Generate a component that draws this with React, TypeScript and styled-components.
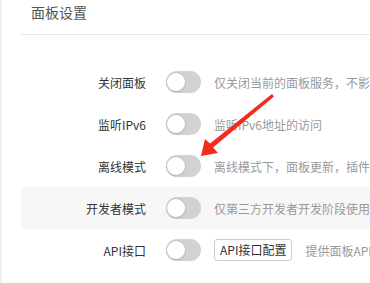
import React from 'react';
import styled, { createGlobalStyle } from 'styled-components';

const GlobalStyle = createGlobalStyle`
  html, body {
    margin: 0;
    padding: 0;
    background: #fff;
  }
  body {
    font-family: "Noto Sans CJK SC", "Noto Sans", sans-serif;
    font-size: 12px;
    color: #333;
  }
`;

const Page = styled.div`
  position: relative;
  width: 370px;
  height: 283px;
  overflow: hidden;
  border-left: 2px solid #f0f0f0;
  box-sizing: border-box;
  padding-left: 19px;
`;

const Title = styled.div`
  height: 35px;
  line-height: 24px;
  padding-left: 10px;
  font-size: 14px;
  color: #555;
  border-bottom: 1px solid #e6e6e6;
  box-sizing: border-box;
`;

const List = styled.div`
  display: flex;
  flex-direction: column;
  padding-top: 26px;
`;

const Row = styled.div<{ $active?: boolean }>`
  display: flex;
  align-items: center;
  height: 42px;
  white-space: nowrap;
  background: ${({ $active }) => ($active ? '#f7f7f7' : 'transparent')};
`;

const Label = styled.div`
  width: 125px;
  flex-shrink: 0;
  text-align: right;
  color: #333;
  font-size: 12px;
`;

const Switch = styled.div<{ $on?: boolean }>`
  position: relative;
  flex-shrink: 0;
  width: 35px;
  height: 22px;
  margin-left: 20px;
  border-radius: 11px;
  background: ${({ $on }) => ($on ? '#20a53a' : '#d2d2d2')};
  box-sizing: border-box;
`;

const Knob = styled.span<{ $on?: boolean }>`
  position: absolute;
  top: 2px;
  left: ${({ $on }) => ($on ? '16px' : '1px')};
  width: 18px;
  height: 18px;
  border-radius: 50%;
  background: #fff;
  box-shadow: 0 0 0 1px #c4c4c4, 0 1px 2px rgba(0, 0, 0, 0.25);
`;

const Desc = styled.span`
  margin-left: 13px;
  color: #999;
  font-size: 12px;
`;

const Button = styled.button`
  margin-left: 13px;
  height: 22px;
  padding: 0 5px;
  border: 1px solid #ccc;
  border-radius: 3px;
  background: #fff;
  color: #333;
  font-family: inherit;
  font-size: 12px;
  line-height: 20px;
  flex-shrink: 0;
`;

const Arrow = styled.svg`
  position: absolute;
  left: 0;
  top: 0;
  pointer-events: none;
`;

type Item = { label: string; desc: string; active?: boolean; button?: string };

const items: Item[] = [
  { label: '关闭面板', desc: '仅关闭当前的面板服务，不影响网站运行' },
  { label: '监听IPv6', desc: '监听IPv6地址的访问' },
  { label: '离线模式', desc: '离线模式下，面板更新，插件安装等功能将不可用' },
  { label: '开发者模式', desc: '仅第三方开发者开发阶段使用', active: true },
  { label: 'API接口', desc: '提供面板API接口', button: 'API接口配置' },
];

export default function App() {
  return (
    <>
      <GlobalStyle />
      <Page>
        <Title>面板设置</Title>
        <List>
          {items.map((it) => (
            <Row key={it.label} $active={it.active}>
              <Label>{it.label}</Label>
              <Switch>
                <Knob />
              </Switch>
              {it.button && <Button>{it.button}</Button>}
              <Desc>{it.desc}</Desc>
            </Row>
          ))}
        </List>
        <Arrow width="370" height="283" viewBox="0 0 370 283">
          <polygon
            points="199,156 203,139 208,143.5 270,94 272,96.5 211,147.5 216,153"
            fill="#f32a1c"
          />
        </Arrow>
      </Page>
    </>
  );
}
